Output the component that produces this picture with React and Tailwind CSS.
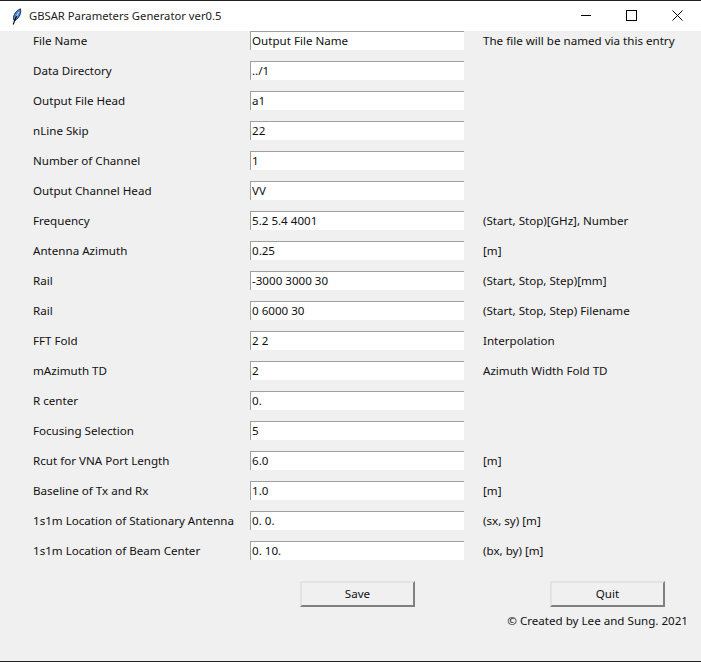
const rows = [
  ["File Name", "Output File Name", "The file will be named via this entry"],
  ["Data Directory", "../1", ""],
  ["Output File Head", "a1", ""],
  ["nLine Skip", "22", ""],
  ["Number of Channel", "1", ""],
  ["Output Channel Head", "VV", ""],
  ["Frequency", "5.2 5.4 4001", "(Start, Stop)[GHz], Number"],
  ["Antenna Azimuth", "0.25", "[m]"],
  ["Rail", "-3000 3000 30", "(Start, Stop, Step)[mm]"],
  ["Rail", "0 6000 30", "(Start, Stop, Step) Filename"],
  ["FFT Fold", "2 2", "Interpolation"],
  ["mAzimuth TD", "2", "Azimuth Width Fold TD"],
  ["R center", "0.", ""],
  ["Focusing Selection", "5", ""],
  ["Rcut for VNA Port Length", "6.0", "[m]"],
  ["Baseline of Tx and Rx", "1.0", "[m]"],
  ["1s1m Location of Stationary Antenna", "0. 0.", "(sx, sy) [m]"],
  ["1s1m Location of Beam Center", "0. 10.", "(bx, by) [m]"],
];

function Feather() {
  return (
    <svg width="10" height="17" viewBox="0 0 10 17" className="shrink-0">
      <path d="M2 12.5 C0.5 9 2.5 3.5 8.5 0.8 C9.3 4.5 8 9.5 3 12.5 Z" fill="#4f86d8" stroke="#1a2b4a" strokeWidth="1" />
      <path d="M4 9 L7 4" stroke="#bcd3f2" strokeWidth="1" fill="none" />
      <path d="M1.2 16.5 L4.5 8" stroke="#000" strokeWidth="1.1" fill="none" />
    </svg>
  );
}

function TkButton({ children, className }) {
  return (
    <button className={"w-[115px] h-[26px] bg-[#f0f0f0] text-[11.6px] text-[#111] border-2 border-t-[#e3e3e3] border-l-[#e3e3e3] border-r-[#808080] border-b-[#808080] " + className}>
      {children}
    </button>
  );
}

export default function App() {
  return (
    <div className="w-[701px] h-[662px] flex flex-col bg-[#f0f0f0] text-[#111] text-[11.6px] font-['Noto_Sans',sans-serif] overflow-hidden">
      <div className="h-[31px] shrink-0 bg-white border-t border-[#222] flex items-center">
        <div className="ml-[12px] w-[17px] flex"><Feather /></div>
        <span className="text-[11.25px] text-[#222]">GBSAR Parameters Generator ver0.5</span>
        <div className="ml-auto mr-[1px] self-start h-[29px] flex items-center">
          <div className="w-[46px] h-full flex items-center justify-center">
            <div className="w-[10px] h-px bg-black" />
          </div>
          <div className="w-[45px] h-full flex items-center justify-center">
            <div className="w-[11px] h-[11px] border border-black" />
          </div>
          <div className="w-[46px] h-full flex items-center justify-center">
            <svg width="11" height="11" viewBox="0 0 11 11">
              <path d="M0.5 0.5 L10.5 10.5 M10.5 0.5 L0.5 10.5" stroke="#000" strokeWidth="1" />
            </svg>
          </div>
        </div>
      </div>
      <div className="flex-1 flex flex-col">
        {rows.map(([label, value, note], i) => (
          <div key={i} className="h-[30px] shrink-0 flex items-start">
            <div className="w-[250px] pl-[33px] h-[20px] leading-[20px] whitespace-nowrap">{label}</div>
            <input
              readOnly
              defaultValue={value}
              className="w-[214px] h-[19px] bg-white border-t border-l border-[#a0a0a0] pl-[1px] pb-[2px] text-[11.6px] text-[#111] outline-none"
            />
            {note && <div className="ml-[19px] h-[20px] leading-[20px] whitespace-nowrap">{note}</div>}
          </div>
        ))}
        <div className="mt-[10px] flex">
          <TkButton className="ml-[300px]">Save</TkButton>
          <TkButton className="ml-[135px]">Quit</TkButton>
        </div>
        <div className="mt-[5px] pr-[13px] text-right leading-[18px]">© Created by Lee and Sung. 2021</div>
      </div>
      <div className="h-px shrink-0 bg-[#222]" />
    </div>
  );
}
